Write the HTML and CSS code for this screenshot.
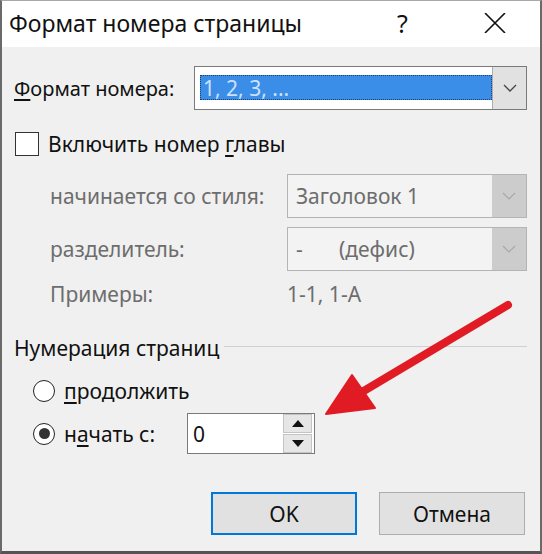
FILE: index.html
```html
<!DOCTYPE html>
<html lang="ru">
<head>
<meta charset="utf-8">
<link rel="stylesheet" href="styles.css">
</head>
<body>
<div class="window">
  <div class="titlebar">
    <span class="title">Формат номера страницы</span>
    <span class="help">?</span>
    <svg class="close" width="22" height="20" viewBox="0 0 22 20"><path d="M1 0 L21 20 M21 0 L1 20" stroke="#111" stroke-width="1.6" fill="none"/></svg>
  </div>
  <div class="content">
    <div class="row row-format">
      <span class="label label-main"><u>Ф</u>ормат номера:</span>
      <div class="combo combo-active">
        <div class="combo-field"><span class="sel">1, 2, 3, ...</span></div>
        <div class="combo-btn"><svg width="14" height="8" viewBox="0 0 14 8"><path d="M1 1 L7 7 L13 1" stroke="#444" stroke-width="1.3" fill="none"/></svg></div>
      </div>
    </div>
    <div class="row row-check">
      <span class="checkbox"></span>
      <span class="label">Включить номер <u>г</u>лавы</span>
    </div>
    <div class="row row-combo first">
      <span class="label label-dis">начинается со стиля:</span>
      <div class="combo combo-dis">
        <div class="combo-field">Заголовок 1</div>
        <div class="combo-btn"><svg width="14" height="8" viewBox="0 0 14 8"><path d="M1 1 L7 7 L13 1" stroke="#a8a8a8" stroke-width="1.1" fill="none"/></svg></div>
      </div>
    </div>
    <div class="row row-combo second">
      <span class="label label-dis">разделитель:</span>
      <div class="combo combo-dis">
        <div class="combo-field"><span class="dash">-</span>(дефис)</div>
        <div class="combo-btn"><svg width="14" height="8" viewBox="0 0 14 8"><path d="M1 1 L7 7 L13 1" stroke="#a8a8a8" stroke-width="1.1" fill="none"/></svg></div>
      </div>
    </div>
    <div class="row row-examples">
      <span class="label label-dis ex-label">Примеры:</span>
      <span class="label-dis">1-1, 1-A</span>
    </div>
    <div class="row row-section">
      <span class="label">Нумерация страниц</span>
      <span class="sep"></span>
    </div>
    <div class="row row-radio r1">
      <span class="radio"></span>
      <span class="label"><u>п</u>родолжить</span>
    </div>
    <div class="row row-radio r2">
      <div class="radio-part">
        <span class="radio checked"></span>
        <span class="label">н<u>а</u>чать с:</span>
      </div>
      <div class="spin">
        <span class="spin-val">0</span>
        <div class="spin-btns">
          <span class="spin-btn"><svg width="12" height="7" viewBox="0 0 12 7"><path d="M0 7 L6 0 L12 7 Z" fill="#111"/></svg></span>
          <span class="spin-btn"><svg width="12" height="7" viewBox="0 0 12 7"><path d="M0 0 L6 7 L12 0 Z" fill="#111"/></svg></span>
        </div>
      </div>
    </div>
    <div class="row row-buttons">
      <button class="btn btn-default">OK</button>
      <button class="btn">Отмена</button>
    </div>
  </div>
  <svg class="arrow" width="542" height="554" viewBox="0 0 542 554">
    <line x1="508" y1="305" x2="362" y2="392" stroke="#e01b24" stroke-width="8" stroke-linecap="round"/>
    <polygon points="326,414 352,375 375,408" fill="#e01b24" stroke="#e01b24" stroke-width="2" stroke-linejoin="round"/>
  </svg>
</div>
</body>
</html>
```
FILE: styles.css
```css
html, body {
  margin: 0;
  padding: 0;
  background: #f0f0f0;
}
body {
  font-family: "Noto Sans", "Open Sans", sans-serif;
  color: #111;
}
.window {
  position: relative;
  width: 542px;
  height: 554px;
  box-sizing: border-box;
  border: 2px solid #6a6a6a;
  border-top: 1px solid #a8a8a8;
  border-bottom: 3px solid #555;
  background: #f0f0f0;
  display: flex;
  flex-direction: column;
}
.titlebar {
  height: 46px;
  background: #ffffff;
  display: flex;
  align-items: center;
  padding-left: 7px;
  flex: none;
}
.title {
  font-size: 23px;
  color: #111;
  width: 388px;
  margin-top: -2px;
}
.help {
  font-size: 25px;
  margin-top: -2px;
  width: 87px;
}
.close {
  display: block;
  margin-top: -2px;
}
.content {
  padding: 0 13px 0 12px;
  display: flex;
  flex-direction: column;
  font-size: 21px;
}
.row {
  display: flex;
  align-items: center;
  flex: none;
}
.label u, .label {
  text-decoration-thickness: 1.5px;
  text-underline-offset: 3px;
}
.row-format {
  margin-top: 19px;
  height: 44px;
}
.label-main {
  width: 180px;
  flex: none;
  font-size: 20px;
}
.combo {
  display: flex;
  box-sizing: border-box;
  height: 44px;
  margin-left: auto;
}
.combo-active {
  width: 333px;
  border: 1px solid #7a7a7a;
  background: #ffffff;
}
.combo-active .combo-field {
  flex: 1;
  padding: 8px 0 9px 5px;
  display: flex;
}
.sel {
  flex: 1;
  background: #3a8ee8;
  border: 1px dotted #1c3f70;
  color: #cfe0ff;
  line-height: 24px;
  padding-left: 2px;
}
.combo-btn {
  width: 34px;
  display: flex;
  align-items: center;
  justify-content: center;
  box-sizing: border-box;
}
.combo-active .combo-btn {
  background: #e1e1e1;
  border-left: 1px solid #adadad;
}
.row-check {
  margin-top: 21px;
  height: 26px;
}
.checkbox {
  width: 24px;
  height: 24px;
  box-sizing: border-box;
  border: 1.5px solid #333;
  background: #fff;
  margin-left: 1px;
  margin-right: 9px;
}
.row-combo.first {
  margin-top: 17px;
}
.row-combo.second {
  margin-top: 9px;
}
.row-combo {
  height: 44px;
}
.label-dis {
  color: #6d6d6d;
}
.row-combo .label, .ex-label {
  padding-left: 36px;
}
.combo-dis {
  width: 240px;
  border: 1px solid #b4b4b4;
  background: #f3f3f3;
  color: #6d6d6d;
}
.combo-dis .combo-field {
  flex: 1;
  display: flex;
  align-items: center;
  padding-left: 8px;
}
.dash {
  width: 43px;
}
.combo-dis .combo-btn {
  background: #cccccc;
  width: 34px;
}
.row-examples {
  margin-top: 8px;
  height: 30px;
}
.ex-label {
  width: 237px;
  flex: none;
}
.row-section {
  margin-top: 24px;
  height: 30px;
}
.sep {
  margin-left: auto;
  width: 303px;
  height: 1px;
  background: #d0d0d0;
  margin-top: -4px;
}
.row-radio.r1 {
  margin-top: 13px;
  height: 30px;
  padding-left: 19px;
}
.radio {
  width: 22px;
  height: 22px;
  box-sizing: border-box;
  border: 1.5px solid #222;
  border-radius: 50%;
  background: #fff;
  margin-right: 9px;
  display: flex;
  align-items: center;
  justify-content: center;
  flex: none;
}
.radio.checked::after {
  content: "";
  width: 11px;
  height: 11px;
  border-radius: 50%;
  background: #333;
}
.row-radio.r2 {
  margin-top: 7px;
  height: 41px;
}
.radio-part {
  width: 154px;
  padding-left: 19px;
  display: flex;
  align-items: center;
  flex: none;
}
.spin {
  width: 128px;
  height: 41px;
  box-sizing: border-box;
  border: 1px solid #7a7a7a;
  background: #fff;
  display: flex;
  align-items: center;
}
.spin-val {
  flex: 1;
  padding-left: 5px;
}
.spin-btns {
  width: 29px;
  margin-right: 2px;
  display: flex;
  flex-direction: column;
  gap: 1px;
}
.spin-btn {
  height: 17px;
  background: #e6e6e6;
  border: 1px solid #c4c4c4;
  display: flex;
  align-items: center;
  justify-content: center;
}
.row-buttons {
  margin-top: 38px;
  height: 43px;
  justify-content: flex-end;
  gap: 22px;
  padding-right: 2px;
}
.btn {
  width: 146px;
  height: 43px;
  box-sizing: border-box;
  background: #e1e1e1;
  border: 1px solid #adadad;
  font-family: "Noto Sans", "Open Sans", sans-serif;
  font-size: 21px;
  color: #111;
  padding: 0;
}
.btn-default {
  border: 2px solid #0078d7;
}
.arrow {
  position: absolute;
  left: -2px;
  top: -1px;
  pointer-events: none;
}
```
